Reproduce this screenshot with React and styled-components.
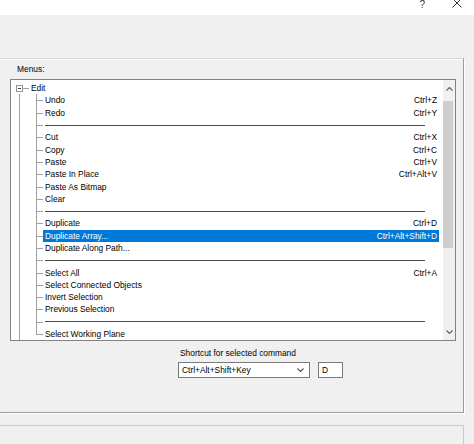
import React from 'react'
import styled, { createGlobalStyle } from 'styled-components'

const GlobalStyle = createGlobalStyle`
  html, body {
    margin: 0;
    padding: 0;
    background: #f0f0f0;
    overflow: hidden;
  }
  body {
    font-family: 'Liberation Sans', Arial, sans-serif;
    font-size: 8.4px;
    color: #000;
  }
`

const Window = styled.div`
  width: 474px;
  height: 444px;
  display: flex;
  flex-direction: column;
  overflow: hidden;
`

const TitleStrip = styled.div`
  height: 15px;
  flex: none;
  background: #fff;
  display: flex;
  justify-content: flex-end;
  align-items: flex-start;
  gap: 27px;
  padding-right: 12px;
  overflow: hidden;
`

const HelpGlyph = styled.span`
  font-size: 10px;
  line-height: 10px;
  margin-top: 0;
  color: #333;
`

const CloseGlyph = styled.svg`
  margin-top: -2px;
`

const Gap = styled.div`
  height: ${(p) => p.h}px;
  flex: none;
`

const Panel = styled.div`
  box-sizing: border-box;
  width: 464px;
  height: 355px;
  flex: none;
  border-top: 1px solid #d8d8d8;
  border-right: 1px solid #9c9c9c;
  border-bottom: 1px solid #9c9c9c;
  box-shadow: inset 0 1px #fbfbfb, 1px 1px #fff;
  display: flex;
  flex-direction: column;
`

const Label = styled.div`
  line-height: 10px;
  height: 10px;
  margin-top: ${(p) => p.mt}px;
  padding-left: ${(p) => p.pl}px;
`

const TreeBox = styled.div`
  box-sizing: border-box;
  margin-top: 5px;
  margin-left: 10px;
  width: 446px;
  height: 262px;
  border: 1px solid #828282;
  background: #fff;
  display: flex;
`

const TreeArea = styled.div`
  flex: 1;
  padding-top: 2px;
  overflow: hidden;
`

const RootRow = styled.div`
  height: 12.3px;
  display: flex;
  align-items: center;
`

const ExpandBox = styled.div`
  box-sizing: border-box;
  width: 7px;
  height: 7px;
  margin-left: 5px;
  border: 1px solid #939393;
  display: flex;
  align-items: center;
  justify-content: center;

  &::after {
    content: '';
    width: 3px;
    height: 1px;
    background: #444;
  }
`

const RootDash = styled.div`
  width: 6px;
  height: 1px;
  background: #a0a0a0;
  margin-right: 2px;
`

const RootChildren = styled.div`
  margin-left: 8px;
  border-left: 1px solid #a0a0a0;
  padding-bottom: 40px;
`

const ChildRow = styled.div`
  position: relative;
  height: 12.3px;
  display: flex;
  align-items: center;
  padding-left: 23px;
  margin-right: 4px;

  &::before {
    content: '';
    position: absolute;
    left: 16px;
    top: 0;
    bottom: ${(p) => (p.last ? '50%' : '0')};
    border-left: 1px solid #a0a0a0;
  }

  &::after {
    content: '';
    position: absolute;
    left: 16px;
    top: 50%;
    width: 7px;
    border-top: 1px solid #a0a0a0;
  }
`

const ItemLabel = styled.div`
  flex: 1;
  height: 100%;
  display: flex;
  align-items: center;
  justify-content: space-between;
  padding: 0 2px;
  white-space: nowrap;
  background: ${(p) => (p.selected ? '#0078d7' : 'transparent')};
  color: ${(p) => (p.selected ? '#fff' : '#000')};
`

const SeparatorLine = styled.div`
  flex: 1;
  height: 1px;
  margin-left: 2px;
  margin-right: 14px;
  background: #4a4a4a;
`

const ScrollBar = styled.div`
  width: 12px;
  flex: none;
  background: #f0f0f0;
  display: flex;
  flex-direction: column;
  align-items: center;
`

const ArrowButton = styled.div`
  height: 17px;
  flex: none;
  display: flex;
  align-items: center;
  justify-content: center;
`

const Track = styled.div`
  flex: 1;
  width: 100%;
  padding-top: 4px;
  box-sizing: border-box;
`

const Thumb = styled.div`
  width: 10px;
  height: 147px;
  background: #cdcdcd;
`

const ShortcutBlock = styled.div`
  margin-left: 178px;
  display: flex;
  flex-direction: column;
`

const ShortcutRow = styled.div`
  margin-top: 4px;
  display: flex;
  gap: 8px;
`

const Combo = styled.div`
  box-sizing: border-box;
  width: 132px;
  height: 16px;
  border: 1px solid #7a7a7a;
  background: #fff;
  display: flex;
  align-items: center;
  justify-content: space-between;
  padding: 0 5px 0 3px;
`

const KeyBox = styled.div`
  box-sizing: border-box;
  width: 25px;
  height: 16px;
  border: 1px solid #7a7a7a;
  background: #fff;
  display: flex;
  align-items: center;
  padding-left: 3px;
`

const BottomPanel = styled.div`
  box-sizing: border-box;
  width: 464px;
  flex: 1;
  border-top: 1px solid #c9c9c9;
  border-right: 1px solid #c9c9c9;
`

const Chevron = ({ up, color = '#606060' }) => (
  <svg width="7" height="4" viewBox="0 0 7 4">
    <polyline
      points={up ? '0.5,3.5 3.5,0.5 6.5,3.5' : '0.5,0.5 3.5,3.5 6.5,0.5'}
      fill="none"
      stroke={color}
      strokeWidth="1.1"
    />
  </svg>
)

const items = [
  { label: 'Undo', key: 'Ctrl+Z' },
  { label: 'Redo', key: 'Ctrl+Y' },
  { sep: true },
  { label: 'Cut', key: 'Ctrl+X' },
  { label: 'Copy', key: 'Ctrl+C' },
  { label: 'Paste', key: 'Ctrl+V' },
  { label: 'Paste In Place', key: 'Ctrl+Alt+V' },
  { label: 'Paste As Bitmap' },
  { label: 'Clear' },
  { sep: true },
  { label: 'Duplicate', key: 'Ctrl+D' },
  { label: 'Duplicate Array...', key: 'Ctrl+Alt+Shift+D', selected: true },
  { label: 'Duplicate Along Path...' },
  { sep: true },
  { label: 'Select All', key: 'Ctrl+A' },
  { label: 'Select Connected Objects' },
  { label: 'Invert Selection' },
  { label: 'Previous Selection' },
  { sep: true },
  { label: 'Select Working Plane' },
]

export default function App() {
  return (
    <Window>
      <GlobalStyle />
      <TitleStrip>
        <HelpGlyph>?</HelpGlyph>
        <CloseGlyph width="10" height="10" viewBox="0 0 10 10">
          <path d="M0.5 0.5 L9.5 9.5 M9.5 0.5 L0.5 9.5" stroke="#333" strokeWidth="1" />
        </CloseGlyph>
      </TitleStrip>
      <Gap h={43} />
      <Panel>
        <Label mt={5} pl={17}>Menus:</Label>
        <TreeBox>
          <TreeArea>
            <RootRow>
              <ExpandBox />
              <RootDash />
              <span>Edit</span>
            </RootRow>
            <RootChildren>
              {items.map((it, i) => (
                <ChildRow key={i} last={i === items.length - 1}>
                  {it.sep ? (
                    <SeparatorLine />
                  ) : (
                    <ItemLabel selected={it.selected}>
                      <span>{it.label}</span>
                      <span>{it.key}</span>
                    </ItemLabel>
                  )}
                </ChildRow>
              ))}
            </RootChildren>
          </TreeArea>
          <ScrollBar>
            <ArrowButton>
              <Chevron up />
            </ArrowButton>
            <Track>
              <Thumb />
            </Track>
            <ArrowButton>
              <Chevron />
            </ArrowButton>
          </ScrollBar>
        </TreeBox>
        <ShortcutBlock>
          <Label mt={7} pl={2}>Shortcut for selected command</Label>
          <ShortcutRow>
            <Combo>
              <span>Ctrl+Alt+Shift+Key</span>
              <Chevron color="#555" />
            </Combo>
            <KeyBox>D</KeyBox>
          </ShortcutRow>
        </ShortcutBlock>
      </Panel>
      <Gap h={12} />
      <BottomPanel />
    </Window>
  )
}
